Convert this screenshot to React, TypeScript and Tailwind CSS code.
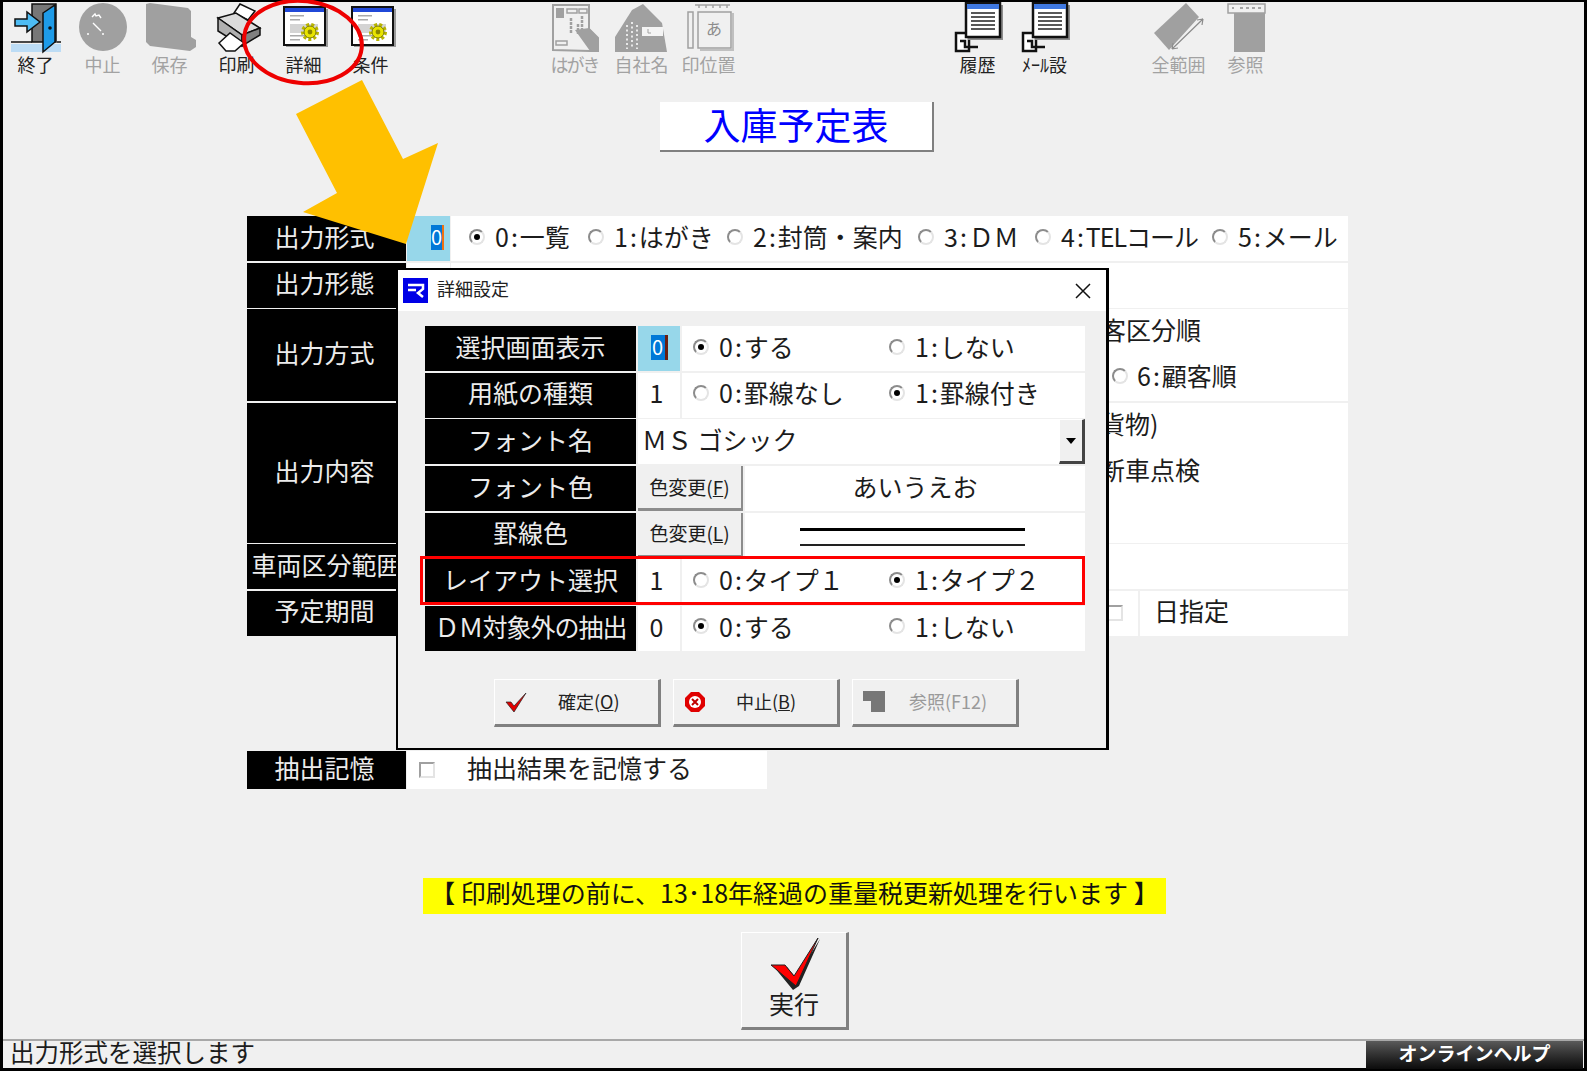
function Radio({ on }: { on?: boolean }) {
  return (
    <span className="flex h-4 w-4 shrink-0 items-center justify-center rounded-full border-2 border-b-[#e4e4e4] border-l-[#8c8c8c] border-r-[#e4e4e4] border-t-[#8c8c8c] bg-white">
      {on && <span className="h-[6px] w-[6px] rounded-full bg-black" />}
    </span>
  );
}

function OptText({ label }: { label: string }) {
  return (
    <span className="whitespace-nowrap">
      <span className="tracking-[2px]">{label.slice(0, 2)}</span>
      {label.slice(2)}
    </span>
  );
}

function Opt({ on, label, className }: { on?: boolean; label: string; className: string }) {
  return (
    <div className={`flex shrink-0 items-center gap-[10px] pb-[4px] ${className}`}>
      <Radio on={on} />
      <OptText label={label} />
    </div>
  );
}

function Label({ text, className }: { text: string; className: string }) {
  return (
    <div className={`flex shrink-0 items-center justify-center whitespace-nowrap bg-black pb-[4px] text-[#ececec] ${className}`}>
      {text}
    </div>
  );
}

function Check3d() {
  return <span className="block h-4 w-4 shrink-0 border-2 border-b-[#e4e4e4] border-l-[#a0a0a0] border-r-[#e4e4e4] border-t-[#a0a0a0] bg-white" />;
}

function Gear({ x, y }: { x: number; y: number }) {
  return (
    <g transform={`translate(${x} ${y})`}>
      <circle r="7.5" fill="none" stroke="#b8b400" strokeWidth="3" strokeDasharray="3 2.2" />
      <circle r="6" fill="#e8e400" stroke="#77750a" strokeWidth="1" />
      <circle r="2.4" fill="#8a8600" />
    </g>
  );
}

function WindowDoc({ x }: { x: number }) {
  return (
    <g transform={`translate(${x} 0)`}>
      <rect x="3" y="9" width="42" height="38" fill="#9a9a9a" />
      <rect x="1" y="7" width="41" height="38" fill="#fff" stroke="#111" strokeWidth="2" />
      <rect x="2" y="8" width="39" height="4" fill="#2048d8" />
      <rect x="7" y="15" width="14" height="1.5" fill="#aaa" />
      <rect x="7" y="19" width="10" height="1.5" fill="#aaa" />
      <rect x="7" y="24" width="28" height="9" fill="#d4d4d4" />
      <rect x="7" y="35" width="18" height="1.5" fill="#aaa" />
      <rect x="7" y="39" width="10" height="1.5" fill="#aaa" />
      <Gear x={27} y={32} />
    </g>
  );
}

function HistDoc({ x }: { x: number }) {
  return (
    <g transform={`translate(${x} 0)`}>
      <rect x="0" y="33" width="13" height="18" fill="#fff" stroke="#111" strokeWidth="2.5" />
      <path d="M4 41h5v6h13" fill="none" stroke="#111" strokeWidth="2.5" />
      <rect x="12" y="5" width="35" height="35" fill="#8c8c8c" />
      <rect x="10" y="3" width="34" height="34" fill="#fff" stroke="#111" strokeWidth="2.5" />
      <rect x="11" y="4" width="32" height="5" fill="#3f78e0" />
      <path d="M15 13h24M15 17h24M15 21h24M15 25h24M15 29h24" stroke="#222" strokeWidth="1.5" />
    </g>
  );
}

function Tool({ label, off, view, labelClass, children }: { label: string; off?: boolean; view: string; labelClass?: string; children: React.ReactNode }) {
  return (
    <div className="flex w-[65px] shrink-0 flex-col items-center">
      <svg viewBox={view} className="h-[52px] w-[65px] shrink-0">
        {children}
      </svg>
      <span className={`whitespace-nowrap text-[18px] leading-[20px] ${off ? "text-[#a2a2a2]" : "text-[#222]"} ${labelClass ?? ""}`}>{label}</span>
    </div>
  );
}

function DlgButton({ icon, label, off, labelClass }: { icon: React.ReactNode; label: React.ReactNode; off?: boolean; labelClass: string }) {
  return (
    <div className={`flex h-[48px] w-[167px] shrink-0 items-center border-b-[3px] border-l border-r-[3px] border-t border-b-[#808080] border-l-white border-r-[#808080] border-t-white bg-[#f0f0f0] pl-[8px] text-[18px] ${off ? "text-[#9a9a9a]" : "text-[#222]"}`}>
      <span className="flex w-[26px] shrink-0 justify-center">{icon}</span>
      <span className={`whitespace-nowrap ${labelClass}`}>{label}</span>
    </div>
  );
}

export default function App() {
  return (
    <div className="relative h-[1072px] w-[1588px] overflow-hidden bg-white text-[25px] text-[#1c1c1c] [font-family:'Noto_Sans_CJK_JP','Noto_Sans',sans-serif]">
      <div className="flex h-[1071px] w-[1587px] flex-col border-b-[3px] border-l-[3px] border-r-[3px] border-t-2 border-black bg-[#f0f0f0]">
        {/* toolbar */}
        <div className="flex h-[78px] shrink-0">
          <div className="flex gap-[2px]">
            <Tool label="終了" view="3 2 65 52">
              <rect x="11" y="44" width="50" height="8" fill="#bcdcf5" />
              <path d="M11 42h21M57 42h4" stroke="#111" strokeWidth="1.5" />
              <rect x="32" y="4" width="24" height="38" fill="#777" stroke="#111" strokeWidth="1.5" />
              <path d="M43 13l12-8v37l-12 10z" fill="#1e9be8" stroke="#111" strokeWidth="1.5" />
              <circle cx="50" cy="28" r="1.8" fill="#111" />
              <path d="M15 19h12v-7l13 10-13 10v-6H15z" fill="#4dbcf4" stroke="#111" strokeWidth="1.5" />
            </Tool>
            <Tool label="中止" off view="70 2 65 52">
              <circle cx="103" cy="27" r="24" fill="#a0a0a0" />
              <path d="M92 17l3-3 1 2 3-1 2 3M93 23l8 8" stroke="#fff" strokeWidth="1.4" fill="none" />
              <circle cx="88" cy="34" r="1" fill="#fff" />
              <circle cx="103" cy="34" r="1" fill="#fff" />
            </Tool>
            <Tool label="保存" off view="137 2 65 52">
              <path d="M146 4l4-1 38 5 3 3v26l5 3v7l-6 4-40-5-4-4z" fill="#a0a0a0" />
            </Tool>
            <Tool label="印刷" view="204 2 65 52">
              <path d="M240 4l15 7-7 9-14-7z" fill="#fff" stroke="#111" strokeWidth="1.5" />
              <path d="M218 18l18-5 24 15-18 7z" fill="#dcdcdc" stroke="#111" strokeWidth="1.5" />
              <path d="M218 18l24 17v11l-24-15z" fill="#b0b0b0" stroke="#111" strokeWidth="1.5" />
              <path d="M242 35l18-7v7l-18 11z" fill="#808080" stroke="#111" strokeWidth="1.5" />
              <path d="M219 43l11-10 14 10-9 8h-9z" fill="#fff" stroke="#111" strokeWidth="1.5" />
            </Tool>
            <Tool label="詳細" view="271 2 65 52">
              <WindowDoc x={283} />
            </Tool>
            <Tool label="条件" view="338 2 65 52">
              <WindowDoc x={351} />
            </Tool>
          </div>
          <div className="ml-[139px] flex gap-[2px]">
            <Tool label="はがき" off labelClass="tracking-[-2px]" view="542 2 65 52">
              <path d="M553 5h36v24l9 9v13h-8l-37-1z" fill="#f0f0f0" stroke="#a0a0a0" strokeWidth="2" />
              <path d="M575 30l14-2 9 10v13h-8z" fill="#a0a0a0" />
              <rect x="556" y="8" width="8" height="10" fill="#a0a0a0" />
              <rect x="567" y="9" width="10" height="4" fill="none" stroke="#a0a0a0" strokeWidth="1.5" />
              <rect x="579" y="9" width="8" height="4" fill="none" stroke="#a0a0a0" strokeWidth="1.5" />
              <path d="M571 18v16M578 24v10M582 16v18" stroke="#a0a0a0" strokeWidth="2.5" strokeDasharray="3 1" />
              <rect x="556" y="41" width="11" height="4" fill="none" stroke="#a0a0a0" strokeWidth="1.5" />
            </Tool>
            <Tool label="自社名" off view="609 2 65 52">
              <path d="M615 37l17-27 11-6 19 19 5 29h-52z" fill="#a0a0a0" />
              <path d="M627 25v24M632 22v27M637 25v24" stroke="#e8e8e8" strokeWidth="2" strokeDasharray="2 2.5" />
              <rect x="642" y="27" width="21" height="9" fill="#f4f4f4" />
              <path d="M648 29v4h3" stroke="#a0a0a0" fill="none" />
            </Tool>
            <Tool label="印位置" off view="676 2 65 52">
              <path d="M695 5h35M699 5v3M706 5v3M713 5v3M720 5v3M727 5v3" stroke="#a0a0a0" strokeWidth="1.5" />
              <path d="M688 12h5v36h-5z" fill="none" stroke="#a0a0a0" strokeWidth="1.5" />
              <rect x="698" y="12" width="33" height="36" fill="#f0f0f0" stroke="#a0a0a0" strokeWidth="1.5" />
              <path d="M733 13v37h-33" fill="none" stroke="#c0c0c0" strokeWidth="2" />
              <text x="714" y="35" textAnchor="middle" fontSize="16" fill="#8c8c8c">あ</text>
            </Tool>
          </div>
          <div className="ml-[204px] flex gap-[2px]">
            <Tool label="履歴" view="945 2 65 52">
              <HistDoc x={956} />
            </Tool>
            <Tool label="ﾒｰﾙ設" view="1012 2 65 52">
              <HistDoc x={1023} />
            </Tool>
          </div>
          <div className="ml-[69px] flex gap-[2px]">
            <Tool label="全範囲" off view="1146 2 65 52">
              <path d="M1186 3l13 14-30 33-15-17z" fill="#a0a0a0" />
              <path d="M1203 19l-31 30M1203 19l-6 1M1203 19l-1 6M1172 49l6-1M1172 49l1-6" stroke="#8c8c8c" strokeWidth="1.2" fill="none" />
            </Tool>
            <Tool label="参照" off view="1213 2 65 52">
              <rect x="1228" y="4" width="37" height="9" fill="#f0f0f0" stroke="#a0a0a0" strokeWidth="1.5" />
              <path d="M1232 8h2M1240 8h3M1246 8h3M1252 8h3M1258 8h3" stroke="#8c8c8c" strokeWidth="1.5" />
              <rect x="1234" y="13" width="31" height="39" fill="#a0a0a0" />
            </Tool>
          </div>
        </div>

        {/* title */}
        <div className="ml-[657px] mt-[22px] flex h-[50px] w-[274px] shrink-0 items-center justify-center border-b-2 border-r-2 border-b-[#808080] border-r-[#808080] bg-white pb-[3px] text-[37px] leading-none text-[#0000ff]">
          入庫予定表
        </div>

        {/* form */}
        <div className="ml-[244px] mt-[64px] flex w-[1101px] shrink-0 flex-col gap-[1.5px]">
          <div className="flex h-[45px] gap-px">
            <Label text="出力形式" className="w-[159px] pr-[4px]" />
            <div className="flex w-[43px] shrink-0 items-center bg-[#97d7ea] pb-[3px] pl-[24px]">
              <span className="flex h-[25px] w-[13px] items-center justify-center border-r-2 border-[#f07010] bg-[#0078d7] text-[20px] leading-none text-white">0</span>
            </div>
            <div className="flex flex-1 items-center bg-white pl-[18px]">
              <Opt on label="0:一覧" className="w-[119px]" />
              <Opt label="1:はがき" className="w-[139px]" />
              <Opt label="2:封筒・案内" className="w-[191px]" />
              <Opt label="3:ＤＭ" className="w-[117px]" />
              <Opt label="4:TELコール" className="w-[177px] tracking-[-1px]" />
              <Opt label="5:メール" className="w-[110px]" />
            </div>
          </div>
          <div className="flex h-[45px] gap-px">
            <Label text="出力形態" className="w-[159px] pr-[4px]" />
            <div className="w-[43px] shrink-0 bg-white" />
            <div className="flex-1 bg-white" />
          </div>
          <div className="flex h-[92px] gap-px">
            <Label text="出力方式" className="w-[159px] pr-[4px]" />
            <div className="w-[43px] shrink-0 bg-white" />
            <div className="flex flex-1 flex-col bg-white pl-[650px]">
              <div className="flex h-[46px] items-center whitespace-nowrap pb-[4px]">客区分順</div>
              <div className="flex h-[46px] items-center gap-[9px] pb-[4px] pl-[11px]">
                <Radio />
                <OptText label="6:顧客順" />
              </div>
            </div>
          </div>
          <div className="flex h-[140px] gap-px">
            <Label text="出力内容" className="w-[159px] pr-[4px]" />
            <div className="w-[43px] shrink-0 bg-white" />
            <div className="flex flex-1 flex-col bg-white pl-[649px]">
              <div className="flex h-[46px] items-center whitespace-nowrap pb-[4px]">貨物)</div>
              <div className="flex h-[46px] items-center whitespace-nowrap pb-[4px]">新車点検</div>
            </div>
          </div>
          <div className="flex h-[45px] gap-px">
            <Label text="車両区分範囲" className="w-[159px]" />
            <div className="w-[43px] shrink-0 bg-white" />
            <div className="flex-1 bg-white" />
          </div>
          <div className="flex h-[45px] gap-px">
            <Label text="予定期間" className="w-[159px] pr-[4px]" />
            <div className="w-[43px] shrink-0 bg-white" />
            <div className="flex flex-1 items-center bg-white pl-[656px]">
              <Check3d />
              <div className="ml-[15px] flex h-full items-center border-l-2 border-[#f0f0f0] pb-[4px] pl-[14px]">日指定</div>
            </div>
          </div>
        </div>

        <div className="ml-[244px] mt-[115px] flex h-[38px] w-[520px] shrink-0 gap-px">
          <Label text="抽出記憶" className="w-[159px] pr-[4px]" />
          <div className="flex flex-1 items-center bg-white pl-[12px]">
            <Check3d />
            <span className="ml-[32px] whitespace-nowrap pb-[4px]">抽出結果を記憶する</span>
          </div>
        </div>

        {/* notice */}
        <div className="ml-[420px] mt-[89px] flex h-[36px] w-[743px] shrink-0 items-center justify-center whitespace-nowrap bg-[#ffff00] pb-[5px] text-[#111]">
          【 印刷処理の前に、13･18年経過の重量税更新処理を行います 】
        </div>

        <div className="ml-[738px] mt-[18px] flex h-[98px] w-[108px] shrink-0 flex-col items-center border-b-[3px] border-l border-r-[3px] border-t border-b-[#808080] border-l-white border-r-[#808080] border-t-white bg-[#f0f0f0]">
          <svg viewBox="0 0 60 54" className="mt-[3px] h-[54px] w-[60px] shrink-0">
            <path d="M10 31h13l9 11L56 3 35 50l-6 4z" fill="#222" />
            <path d="M7 29h14l9 11L54 2 32 50z" fill="#ff0000" stroke="#222" strokeWidth="1" />
          </svg>
          <span className="leading-[26px]">実行</span>
        </div>

        {/* status bar */}
        <div className="mt-auto flex h-[29px] shrink-0 items-center justify-between border-t-2 border-[#a8a8a8]">
          <span className="ml-[7px] whitespace-nowrap pb-[4px] text-[24.5px] leading-none">出力形式を選択します</span>
          <div className="mr-px flex h-[28px] w-[217px] items-center justify-center whitespace-nowrap bg-gradient-to-b from-[#5a5a5a] to-[#0c0c0c] pb-[5px] text-[19px] font-bold leading-none text-white">
            オンラインヘルプ
          </div>
        </div>
      </div>

      {/* dialog */}
      <div className="absolute left-[396px] top-[268px] flex h-[482px] w-[713px] flex-col border-2 border-r-[3px] border-black bg-[#f0f0f0]">
        <div className="flex h-[41px] shrink-0 items-center bg-white pl-[5px] pr-[15px]">
          <svg viewBox="0 0 25 25" className="h-[25px] w-[25px] shrink-0">
            <rect width="25" height="25" fill="#0000e6" />
            <path d="M5 7h15v4l-5 4 5 4" fill="none" stroke="#fff" strokeWidth="2.5" />
            <path d="M5 12h8" stroke="#fff" strokeWidth="2.5" />
          </svg>
          <span className="ml-[9px] pb-[5px] text-[18px] text-[#222]">詳細設定</span>
          <svg viewBox="0 0 16 16" className="ml-auto h-4 w-4">
            <path d="M1 1l14 14M15 1L1 15" stroke="#111" strokeWidth="1.5" />
          </svg>
        </div>
        <div className="ml-[27px] mt-[15px] flex w-[660px] flex-col gap-[1.67px]">
          <div className="flex h-[45px] gap-[2px]">
            <Label text="選択画面表示" className="w-[211px]" />
            <div className="flex w-[42px] shrink-0 items-center justify-center bg-[#97d7ea] pb-[3px]">
              <span className="flex h-[25px] w-[17px] items-center justify-center border-r-[3px] border-[#6b1d10] bg-[#0078d7] text-[20px] leading-none text-white">0</span>
            </div>
            <div className="flex flex-1 items-center bg-white pl-[11px]">
              <Opt on label="0:する" className="w-[196px]" />
              <Opt label="1:しない" className="w-[180px]" />
            </div>
          </div>
          <div className="flex h-[45px] gap-[2px]">
            <Label text="用紙の種類" className="w-[211px]" />
            <div className="flex w-[42px] shrink-0 items-center justify-center bg-white pb-[4px] pr-[5px]">1</div>
            <div className="flex flex-1 items-center bg-white pl-[11px]">
              <Opt label="0:罫線なし" className="w-[196px]" />
              <Opt on label="1:罫線付き" className="w-[180px]" />
            </div>
          </div>
          <div className="flex h-[45px] gap-[2px]">
            <Label text="フォント名" className="w-[211px]" />
            <div className="flex flex-1 items-center justify-between bg-white pl-[4px]">
              <span className="whitespace-nowrap pb-[4px]">ＭＳ ゴシック</span>
              <div className="flex h-[45px] w-[26px] items-center justify-center border-b-[3px] border-l border-r-[3px] border-t border-b-[#444] border-l-white border-r-[#444] border-t-white bg-[#f0f0f0]">
                <span className="h-0 w-0 border-x-[5px] border-t-[6px] border-x-transparent border-t-black" />
              </div>
            </div>
          </div>
          <div className="flex h-[45px] gap-[2px]">
            <Label text="フォント色" className="w-[211px]" />
            <div className="flex w-[105px] shrink-0 items-center justify-center border-b-[3px] border-r-2 border-b-[#8c8c8c] border-r-[#8c8c8c] bg-[#f0f0f0] text-[19px]">
              <span>色変更(<span className="underline">F</span>)</span>
            </div>
            <div className="flex flex-1 items-center justify-center bg-white pb-[4px]">あいうえお</div>
          </div>
          <div className="flex h-[45px] gap-[2px]">
            <Label text="罫線色" className="w-[211px]" />
            <div className="flex w-[105px] shrink-0 items-center justify-center border-b-[3px] border-r-2 border-b-[#8c8c8c] border-r-[#8c8c8c] bg-[#f0f0f0] text-[19px]">
              <span>色変更(<span className="underline">L</span>)</span>
            </div>
            <div className="flex flex-1 flex-col items-center justify-center gap-[13px] bg-white pr-[6px] pt-[3px]">
              <div className="h-[3px] w-[225px] bg-black" />
              <div className="h-[2px] w-[225px] bg-[#222]" />
            </div>
          </div>
          <div className="flex h-[45px] gap-[2px]">
            <Label text="レイアウト選択" className="w-[211px]" />
            <div className="flex w-[42px] shrink-0 items-center justify-center bg-white pb-[4px] pr-[5px]">1</div>
            <div className="flex flex-1 items-center bg-white pl-[11px]">
              <Opt label="0:タイプ１" className="w-[196px]" />
              <Opt on label="1:タイプ２" className="w-[180px]" />
            </div>
          </div>
          <div className="flex h-[45px] gap-[2px]">
            <Label text="ＤＭ対象外の抽出" className="w-[211px] tracking-[-1px]" />
            <div className="flex w-[42px] shrink-0 items-center justify-center bg-white pb-[4px] pr-[5px]">0</div>
            <div className="flex flex-1 items-center bg-white pl-[11px]">
              <Opt on label="0:する" className="w-[196px]" />
              <Opt label="1:しない" className="w-[180px]" />
            </div>
          </div>
        </div>
        <div className="ml-[96px] mt-[28px] flex gap-[12px]">
          <DlgButton
            labelClass="ml-[29px]"
            label={<>確定(<span className="underline">O</span>)</>}
            icon={
              <svg viewBox="0 0 22 20" className="h-5 w-[22px]">
                <path d="M1 10h5l3 4L21 1 9 20z" fill="#e00000" stroke="#222" strokeWidth="0.7" />
              </svg>
            }
          />
          <DlgButton
            labelClass="ml-[28px]"
            label={<>中止(<span className="underline">B</span>)</>}
            icon={
              <svg viewBox="0 0 22 22" className="h-[22px] w-[22px]">
                <path d="M7 1h8l6 6v8l-6 6H7l-6-6V7z" fill="#e00000" />
                <circle cx="11" cy="11" r="6" fill="#fff" />
                <path d="M8 8l6 6M14 8l-6 6" stroke="#c00000" strokeWidth="2" />
              </svg>
            }
          />
          <DlgButton
            off
            labelClass="ml-[22px]"
            label="参照(F12)"
            icon={
              <svg viewBox="0 0 22 21" className="h-[21px] w-[22px]">
                <path d="M0 0h22v21H8V10H0z" fill="#777" />
              </svg>
            }
          />
        </div>
      </div>

      {/* annotations */}
      <div className="absolute left-[420px] top-[556px] h-[49px] w-[665px] border-[3px] border-[#ff0000]" />
      <svg viewBox="0 0 1588 1072" className="pointer-events-none absolute left-0 top-0 h-[1072px] w-[1588px]">
        <polygon points="362,80 403,159 438,143 406,244 303,212 337,193 296,114" fill="#ffc000" />
        <ellipse cx="303" cy="42" rx="59" ry="41" transform="rotate(6 303 42)" fill="none" stroke="#ee0000" strokeWidth="4" />
      </svg>
    </div>
  );
}
